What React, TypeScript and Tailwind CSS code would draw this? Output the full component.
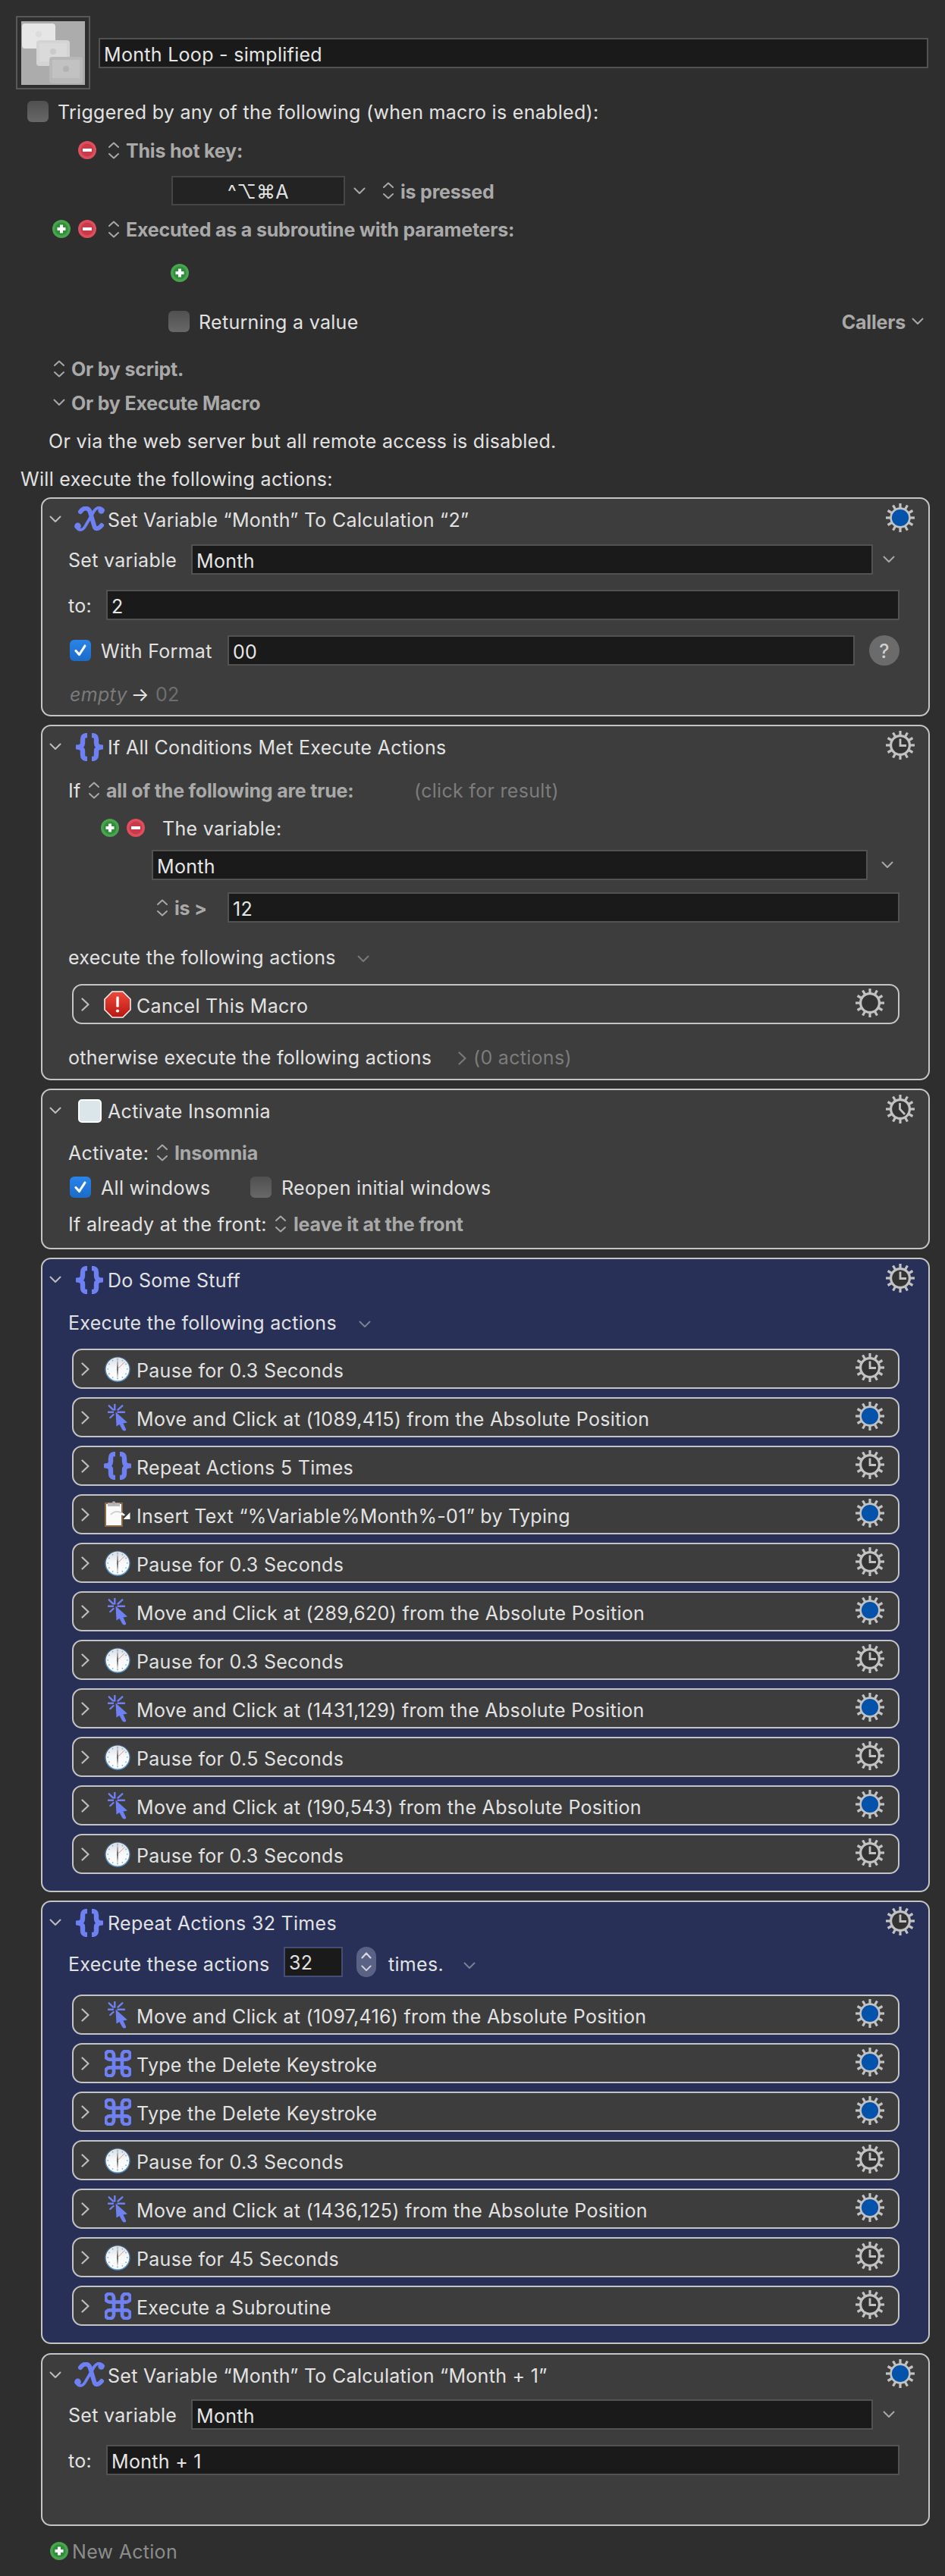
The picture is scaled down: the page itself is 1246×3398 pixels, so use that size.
import React from "react";

const BLUE = "#6f80f2";

function Chev({ dir = "down", color = "#bdbdbd", w = 16, h = 10, sw = 2 }: { dir?: "down" | "right"; color?: string; w?: number; h?: number; sw?: number }) {
  if (dir === "right")
    return (
      <svg width="11" height="18" viewBox="0 0 11 18" className="shrink-0">
        <path d="M1.5 1.5 L9.5 9 L1.5 16.5" fill="none" stroke={color} strokeWidth={2.2} strokeLinecap="round" strokeLinejoin="round" />
      </svg>
    );
  return (
    <svg width={w} height={h} viewBox="0 0 16 10" className="shrink-0">
      <path d="M1.5 1.5 L8 8 L14.5 1.5" fill="none" stroke={color} strokeWidth={sw} strokeLinecap="round" strokeLinejoin="round" />
    </svg>
  );
}

function UpDown({ color = "#a8a8a8" }: { color?: string }) {
  return (
    <svg width="16" height="23" viewBox="0 0 16 23" className="shrink-0">
      <path d="M2 7 L8 1.5 L14 7 M2 16 L8 21.5 L14 16" fill="none" stroke={color} strokeWidth={2} strokeLinecap="round" strokeLinejoin="round" />
    </svg>
  );
}

function Plus() {
  return (
    <svg width="24" height="24" viewBox="0 0 24 24" className="shrink-0">
      <circle cx="12" cy="12" r="12" fill="#4aa34e" />
      <circle cx="12" cy="12" r="8.5" fill="#2f8f3a" />
      <path d="M12 6.5 V17.5 M6.5 12 H17.5" stroke="#fff" strokeWidth={4} />
    </svg>
  );
}

function Minus() {
  return (
    <svg width="24" height="24" viewBox="0 0 24 24" className="shrink-0">
      <circle cx="12" cy="12" r="12" fill="#dd4f5c" />
      <circle cx="12" cy="12" r="8.5" fill="#c93a4a" />
      <path d="M6 12 H18" stroke="#fff" strokeWidth={4} />
    </svg>
  );
}

function Check({ on = false }: { on?: boolean }) {
  if (on)
    return (
      <div className="w-[28px] h-[28px] rounded-[6px] bg-gradient-to-b from-[#2a84ea] to-[#1c6bc8] shrink-0 flex items-center justify-center">
        <svg width="20" height="20" viewBox="0 0 20 20">
          <path d="M4 10.5 L8.5 15.5 L16 4" fill="none" stroke="#fff" strokeWidth={3.2} strokeLinecap="round" strokeLinejoin="round" />
        </svg>
      </div>
    );
  return <div className="w-[28px] h-[28px] rounded-[6px] bg-gradient-to-b from-[#505050] to-[#686868] shrink-0" />;
}

const ANGLES = [0, 30, 60, 90, 120, 150, 180, 210, 240, 270, 300, 330];

function Gear({ kind }: { kind: "blue" | "clock" | "none" | "diag" }) {
  return (
    <svg width="38" height="38" viewBox="0 0 38 38" className="shrink-0">
      {ANGLES.map((a) => (
        <rect key={a} x="17.4" y="0" width="3.2" height="8" fill="#c2c2c2" transform={`rotate(${a} 19 19)`} />
      ))}
      <circle cx="19" cy="19" r="12.4" fill={kind === "blue" ? "#0353ab" : "#333333"} stroke="#c2c2c2" strokeWidth={kind === "blue" ? 2.6 : 3.2} />
      {kind === "clock" && <path d="M19 10.5 V19.5 H27" fill="none" stroke="#c2c2c2" strokeWidth={2.8} />}
      {kind === "diag" && <path d="M18.5 11 V19 L25 26" fill="none" stroke="#c2c2c2" strokeWidth={2.8} />}
    </svg>
  );
}

function XIcon() {
  return (
    <svg width="40" height="34" viewBox="0 0 40 34" className="shrink-0">
      <path d="M8 7 C12 1 19 1 21 8 L26 25 C27.5 31 32 30 36 25" fill="none" stroke={BLUE} strokeWidth={6} strokeLinecap="round" />
      <path d="M38 5 C33 -1 28 2 25 8 L15 25 C11 33 5 32 3 27" fill="none" stroke={BLUE} strokeWidth={3.8} strokeLinecap="round" />
      <circle cx="35.5" cy="5.5" r="4.2" fill={BLUE} />
      <circle cx="4.5" cy="26" r="4.4" fill={BLUE} />
    </svg>
  );
}

function Braces() {
  return (
    <svg width="36" height="37" viewBox="0 0 36 37" className="shrink-0">
      <path d="M15 3 C10 3 9 5 9 9 V13 C9 16 7 18.5 2 18.5 C7 18.5 9 21 9 24 V28 C9 32 10 34 15 34" fill="none" stroke={BLUE} strokeWidth={6.4} strokeLinejoin="round" />
      <path d="M21 3 C26 3 27 5 27 9 V13 C27 16 29 18.5 34 18.5 C29 18.5 27 21 27 24 V28 C27 32 26 34 21 34" fill="none" stroke={BLUE} strokeWidth={6.4} strokeLinejoin="round" />
    </svg>
  );
}

function Cmd() {
  return (
    <svg width="35" height="36" viewBox="2.4 2.4 19.2 19.2" className="shrink-0">
      <path d="M15 6v12a3 3 0 1 0 3-3H6a3 3 0 1 0 3 3V6a3 3 0 1 0-3 3h12a3 3 0 1 0-3-3" fill="none" stroke={BLUE} strokeWidth={2.6} />
    </svg>
  );
}

function Cursor() {
  return (
    <svg width="26" height="36" viewBox="0 0 26 36" className="shrink-0">
      <path d="M10.5 10.5 L26 24.5 L20.5 25.5 L24 33 Q24.5 35.5 22 35.5 Q20 35.5 19 33.5 L15.5 27 L11.5 29.5 Z" fill={BLUE} />
      <path d="M9.3 0.5 V7.5 M1.7 2.3 L7.2 7.6 M19.3 2.3 L13.5 7.6 M0.5 10.7 H7 M3.3 18 L7.5 14 M13.5 10.7 H22" stroke={BLUE} strokeWidth={2.4} strokeLinecap="round" />
    </svg>
  );
}

function ClockIcon() {
  return (
    <svg width="34" height="34" viewBox="0 0 34 34" className="shrink-0">
      <defs>
        <linearGradient id="cf" x1="0" y1="0" x2="0" y2="1">
          <stop offset="0" stopColor="#d8dce2" />
          <stop offset="0.45" stopColor="#f6f7f8" />
          <stop offset="1" stopColor="#ffffff" />
        </linearGradient>
        <linearGradient id="cr" x1="0" y1="0" x2="0" y2="1">
          <stop offset="0" stopColor="#3a4f66" />
          <stop offset="1" stopColor="#5aa0de" />
        </linearGradient>
      </defs>
      <circle cx="17" cy="17" r="16.8" fill="url(#cr)" />
      <circle cx="17" cy="16.8" r="15.4" fill="url(#cf)" />
      {ANGLES.map((a) => (
        <circle key={a} cx="17" cy="4" r="0.9" fill="#7fb0e0" transform={`rotate(${a} 17 16.8)`} />
      ))}
      <path d="M17 3.5 L17.7 16.8 L17 30 L16.3 16.8 Z" fill="#222" />
      <path d="M17 16.8 L26.5 7.5" stroke="#e08072" strokeWidth={0.8} />
    </svg>
  );
}

function Clipboard() {
  return (
    <svg width="36" height="35" viewBox="0 0 36 35" className="shrink-0">
      <rect x="1" y="2" width="24" height="32" fill="#8a6a48" />
      <rect x="3" y="4" width="20" height="28" fill="#fafafa" />
      <rect x="5" y="2.5" width="16" height="4.5" fill="#b8b8b8" />
      <circle cx="13" cy="2.5" r="2.2" fill="#aaaaaa" />
      <path d="M9 18 C14 12.5 21 13 26 18" fill="none" stroke="#d2d2d2" strokeWidth={2} />
      <path d="M22 17 C24 17 26 17.5 27 19" fill="none" stroke="#fff" strokeWidth={2.4} />
      <path d="M34.5 15 V24 H25.5 Z" fill="#fff" />
    </svg>
  );
}

function Stop() {
  return (
    <svg width="36" height="36" viewBox="0 0 36 36" className="shrink-0">
      <defs>
        <linearGradient id="st" x1="0" y1="0" x2="0" y2="1">
          <stop offset="0" stopColor="#ee4a3e" />
          <stop offset="1" stopColor="#b8160f" />
        </linearGradient>
      </defs>
      <path d="M11 1 H25 L35 11 V25 L25 35 H11 L1 25 V11 Z" fill="url(#st)" stroke="#f2f2f2" strokeWidth={1.6} />
      <rect x="16.3" y="7.5" width="3.4" height="14" rx="1.2" fill="#fff" />
      <circle cx="18" cy="26.5" r="2.1" fill="#fff" />
    </svg>
  );
}

function AppTile() {
  return <div className="w-[31px] h-[31px] rounded-[5px] bg-[#dbe6ea] border-2 border-[#fbfdfd] shrink-0" />;
}

function MacroIcon() {
  return (
    <svg width="84" height="84" viewBox="0 0 84 84">
      <rect width="84" height="84" fill="#acacac" />
      <rect x="1" y="3" width="44" height="33" rx="4" fill="#e6e6e6" />
      <rect x="20" y="25" width="44" height="34" rx="4" fill="#d4d4d4" />
      <rect x="24" y="29" width="36" height="24" fill="#dadada" />
      <rect x="37" y="47" width="44" height="35" rx="4" fill="#b8b8b8" />
      <rect x="41" y="51" width="36" height="24" fill="#c2c2c2" />
      <circle cx="23" cy="17" r="4" fill="#dcdcdc" />
      <circle cx="42" cy="40" r="4" fill="#cacaca" />
      <circle cx="59" cy="63" r="4" fill="#b2b2b2" />
    </svg>
  );
}

function Field({ children, cls = "" }: { children?: React.ReactNode; cls?: string }) {
  return (
    <div className={`h-[40px] bg-[#1a1a1a] border-2 border-[#525252] pl-[5px] flex items-center leading-none text-[#e6e6e6] ${cls}`}>
      <span className="relative top-[1px]">{children}</span>
    </div>
  );
}

function Bold({ children }: { children: React.ReactNode }) {
  return <span className="font-bold text-[#a9a9a9] tracking-[-0.2px]">{children}</span>;
}

type GearKind = "blue" | "clock" | "none" | "diag";

function Head({ icon, title, gear }: { icon: React.ReactNode; title: string; gear: GearKind }) {
  return (
    <div className="h-[54px] flex items-center pl-[9px] pr-[18px]">
      <div className="w-[16px] flex justify-center">
        <Chev />
      </div>
      <div className="w-[40px] ml-[17px] flex justify-center">{icon}</div>
      <span className="ml-[4px]">{title}</span>
      <div className="ml-auto -mt-[4px]">
        <Gear kind={gear} />
      </div>
    </div>
  );
}

function Sub({ icon, title, gear }: { icon: React.ReactNode; title: string; gear: GearKind }) {
  return (
    <div className="h-[53px] ml-[5px] rounded-[13px] border-2 border-[#c4c4c4] bg-[#3d3d3d] flex items-center pl-[10px] pr-[18px]">
      <Chev dir="right" />
      <div className="w-[40px] ml-[17px] flex justify-center">{icon}</div>
      <span className="ml-[5px] relative top-[1px]">{title}</span>
      <div className="ml-auto -mt-[3px]">
        <Gear kind={gear} />
      </div>
    </div>
  );
}

function Box({ blue = false, children, cls = "" }: { blue?: boolean; children: React.ReactNode; cls?: string }) {
  return (
    <div className={`rounded-[13px] border-2 border-[#c4c4c4] ${blue ? "bg-[#283058]" : "bg-[#3d3d3d]"} ${cls}`}>{children}</div>
  );
}

const Row = "h-[34px] flex items-center";

const stuff: [React.ReactNode, string, GearKind][] = [
  [<ClockIcon />, "Pause for 0.3 Seconds", "clock"],
  [<Cursor />, "Move and Click at (1089,415) from the Absolute Position", "blue"],
  [<Braces />, "Repeat Actions 5 Times", "clock"],
  [<Clipboard />, "Insert Text “%Variable%Month%-01” by Typing", "blue"],
  [<ClockIcon />, "Pause for 0.3 Seconds", "clock"],
  [<Cursor />, "Move and Click at (289,620) from the Absolute Position", "blue"],
  [<ClockIcon />, "Pause for 0.3 Seconds", "clock"],
  [<Cursor />, "Move and Click at (1431,129) from the Absolute Position", "blue"],
  [<ClockIcon />, "Pause for 0.5 Seconds", "clock"],
  [<Cursor />, "Move and Click at (190,543) from the Absolute Position", "blue"],
  [<ClockIcon />, "Pause for 0.3 Seconds", "clock"],
];

const repeat: [React.ReactNode, string, GearKind][] = [
  [<Cursor />, "Move and Click at (1097,416) from the Absolute Position", "blue"],
  [<Cmd />, "Type the Delete Keystroke", "blue"],
  [<Cmd />, "Type the Delete Keystroke", "blue"],
  [<ClockIcon />, "Pause for 0.3 Seconds", "clock"],
  [<Cursor />, "Move and Click at (1436,125) from the Absolute Position", "blue"],
  [<ClockIcon />, "Pause for 45 Seconds", "clock"],
  [<Cmd />, "Execute a Subroutine", "clock"],
];

export default function App() {
  return (
    <div className="w-[1246px] h-[3398px] overflow-hidden bg-[#2e2e2e] text-[#e2e2e2] text-[25px] leading-[34px] tracking-[0.3px] [font-family:Inter,'DejaVu_Sans',sans-serif] [&_span]:translate-y-[1px]">
      <div className="flex h-[118px] pt-[21px] pl-[21px]">
        <div className="w-[98px] h-[97px] border-2 border-[#585858] p-[5px] shrink-0">
          <MacroIcon />
        </div>
        <div className="ml-[11px] mt-[29px] w-[1094px]">
          <Field>Month Loop - simplified</Field>
        </div>
      </div>

      <div className={`${Row} mt-[12px] pl-[36px] gap-[12px]`}>
        <Check />
        <span>Triggered by any of the following (when macro is enabled):</span>
      </div>
      <div className={`${Row} mt-[17px] pl-[103px]`}>
        <Minus />
        <div className="ml-[15px]">
          <UpDown />
        </div>
        <span className="ml-[8px]">
          <Bold>This hot key:</Bold>
        </span>
      </div>
      <div className="h-[39px] mt-[17px] flex items-center pl-[226px]">
        <div className="w-[229px] h-[39px] bg-[#232323] border-2 border-[#464646] flex items-center justify-center">
          <span>^⌥⌘A</span>
        </div>
        <div className="ml-[11px]">
          <Chev color="#a8a8a8" />
        </div>
        <div className="ml-[22px]">
          <UpDown />
        </div>
        <span className="ml-[8px]">
          <Bold>is pressed</Bold>
        </span>
      </div>
      <div className={`${Row} mt-[14px] pl-[69px]`}>
        <Plus />
        <div className="ml-[10px]">
          <Minus />
        </div>
        <div className="ml-[15px]">
          <UpDown />
        </div>
        <span className="ml-[8px]">
          <Bold>Executed as a subroutine with parameters:</Bold>
        </span>
      </div>
      <div className={`${Row} mt-[24px] pl-[225px]`}>
        <Plus />
      </div>
      <div className={`${Row} mt-[30px] pl-[222px] pr-[28px] gap-[12px]`}>
        <Check />
        <span>Returning a value</span>
        <div className="ml-auto flex items-center gap-[8px]">
          <Bold>Callers</Bold>
          <Chev color="#a8a8a8" />
        </div>
      </div>
      <div className={`${Row} mt-[28px] pl-[70px] gap-[8px]`}>
        <UpDown />
        <Bold>Or by script.</Bold>
      </div>
      <div className={`${Row} mt-[11px] pl-[70px] gap-[8px]`}>
        <Chev color="#a8a8a8" />
        <Bold>Or by Execute Macro</Bold>
      </div>
      <div className={`${Row} mt-[16px] pl-[64px]`}>
        <span>Or via the web server but all remote access is disabled.</span>
      </div>
      <div className={`${Row} mt-[16px] pl-[27px]`}>
        <span>Will execute the following actions:</span>
      </div>

      <div className="mt-[8px] ml-[54px] mr-[20px] flex flex-col gap-[11px]">
        <Box>
          <Head icon={<XIcon />} title="Set Variable “Month” To Calculation “2”" gear="blue" />
          <div className="pl-[34px] pr-[38px] pb-[11px]">
            <div className="flex items-center mt-[6px]">
              <span className="w-[162px]">Set variable</span>
              <Field cls="flex-1">Month</Field>
              <div className="w-[35px] pl-[13px]">
                <Chev color="#a8a8a8" />
              </div>
            </div>
            <div className="flex items-center mt-[20px]">
              <span className="w-[50px]">to:</span>
              <Field cls="flex-1">2</Field>
            </div>
            <div className="flex items-center mt-[20px]">
              <div className="w-[210px] pl-[2px] flex items-center gap-[13px]">
                <Check on />
                <span>With Format</span>
              </div>
              <Field cls="flex-1">00</Field>
              <div className="ml-[19px] w-[40px] h-[40px] rounded-full bg-[#6b6b6b] flex items-center justify-center text-[#d0d0d0] font-medium">
                <span>?</span>
              </div>
            </div>
            <div className={`${Row} mt-[20px] pl-[2px]`}>
              <span className="italic text-[#7a7a7a]">empty</span>
              <span className="text-[#e6e6e6] ml-[5px]">→</span>
              <span className="text-[#6e6e6e] ml-[8px]">02</span>
            </div>
          </div>
        </Box>

        <Box>
          <Head icon={<Braces />} title="If All Conditions Met Execute Actions" gear="clock" />
          <div className="pl-[34px] pr-[38px] pb-[12px]">
            <div className={`${Row} mt-[13px]`}>
              <span className="w-[26px]">If</span>
              <UpDown />
              <span className="ml-[8px] w-[406px]">
                <Bold>all of the following are true:</Bold>
              </span>
              <span className="text-[#7c7c7c]">(click for result)</span>
            </div>
            <div className={`${Row} mt-[16px] pl-[43px]`}>
              <Plus />
              <div className="ml-[10px]">
                <Minus />
              </div>
              <span className="ml-[23px]">The variable:</span>
            </div>
            <div className="flex items-center mt-[12px] pl-[110px]">
              <Field cls="flex-1">Month</Field>
              <div className="w-[42px] pl-[18px]">
                <Chev color="#a8a8a8" />
              </div>
            </div>
            <div className="flex items-center mt-[16px]">
              <div className="w-[210px] pl-[116px] flex items-center gap-[8px]">
                <UpDown />
                <Bold>is &gt;</Bold>
              </div>
              <Field cls="flex-1">12</Field>
            </div>
            <div className={`${Row} mt-[28px]`}>
              <span className="w-[381px]">execute the following actions</span>
              <div className="mt-[6px]">
                <Chev color="#7a7a7a" />
              </div>
            </div>
            <div className="mt-[19px]">
              <Sub icon={<Stop />} title="Cancel This Macro" gear="none" />
            </div>
            <div className={`${Row} mt-[26px]`}>
              <span className="w-[514px]">otherwise execute the following actions</span>
              <div className="mt-[3px]">
                <Chev dir="right" color="#7a7a7a" />
              </div>
              <span className="ml-[9px] text-[#7c7c7c]">(0 actions)</span>
            </div>
          </div>
        </Box>

        <Box>
          <Head icon={<AppTile />} title="Activate Insomnia" gear="diag" />
          <div className="pl-[34px] pr-[38px] pb-[15px]">
            <div className={`${Row} mt-[11px]`}>
              <span className="w-[116px]">Activate:</span>
              <UpDown />
              <span className="ml-[8px]">
                <Bold>Insomnia</Bold>
              </span>
            </div>
            <div className={`${Row} mt-[12px] pl-[2px]`}>
              <Check on />
              <span className="ml-[13px] w-[197px]">All windows</span>
              <Check />
              <span className="ml-[13px]">Reopen initial windows</span>
            </div>
            <div className={`${Row} mt-[14px]`}>
              <span className="w-[272px]">If already at the front:</span>
              <UpDown />
              <span className="ml-[9px]">
                <Bold>leave it at the front</Bold>
              </span>
            </div>
          </div>
        </Box>

        <Box blue>
          <Head icon={<Braces />} title="Do Some Stuff" gear="clock" />
          <div className="pl-[34px] pr-[38px] pb-[22px]">
            <div className={`${Row} mt-[12px]`}>
              <span className="w-[383px]">Execute the following actions</span>
              <div className="mt-[6px]">
                <Chev color="#7a7f96" />
              </div>
            </div>
            <div className="mt-[18px] flex flex-col gap-[11px]">
              {stuff.map(([icon, t, g], i) => (
                <Sub key={i} icon={icon} title={t} gear={g} />
              ))}
            </div>
          </div>
        </Box>

        <Box blue>
          <Head icon={<Braces />} title="Repeat Actions 32 Times" gear="clock" />
          <div className="pl-[34px] pr-[38px] pb-[22px]">
            <div className="flex items-center mt-[5px] h-[40px]">
              <span className="w-[284px] relative top-[2px]">Execute these actions</span>
              <div className="w-[78px] h-[40px] bg-[#1a1a1a] border-2 border-[#454d74] pl-[5px] flex items-center leading-none">
                <span>32</span>
              </div>
              <div className="ml-[18px] w-[26px] h-[40px] rounded-full bg-[#5a6285] flex flex-col items-center justify-center gap-[8px]">
                <svg width="14" height="9" viewBox="0 0 14 9">
                  <path d="M1.5 7.5 L7 1.5 L12.5 7.5" fill="none" stroke="#d8d8e0" strokeWidth={2.2} strokeLinecap="round" strokeLinejoin="round" />
                </svg>
                <Chev w={14} h={9} color="#d8d8e0" sw={2.2} />
              </div>
              <span className="ml-[16px] w-[99px] relative top-[2px]">times.</span>
              <div className="mt-[10px]">
                <Chev color="#7a7f96" />
              </div>
            </div>
            <div className="mt-[23px] flex flex-col gap-[11px]">
              {repeat.map(([icon, t, g], i) => (
                <Sub key={i} icon={icon} title={t} gear={g} />
              ))}
            </div>
          </div>
        </Box>

        <Box cls="mt-[1px]">
          <Head icon={<XIcon />} title="Set Variable “Month” To Calculation “Month + 1”" gear="blue" />
          <div className="pl-[34px] pr-[38px] pb-[65px]">
            <div className="flex items-center mt-[5px]">
              <span className="w-[162px]">Set variable</span>
              <Field cls="flex-1">Month</Field>
              <div className="w-[35px] pl-[13px]">
                <Chev color="#a8a8a8" />
              </div>
            </div>
            <div className="flex items-center mt-[20px]">
              <span className="w-[50px]">to:</span>
              <Field cls="flex-1">Month + 1</Field>
            </div>
          </div>
        </Box>
      </div>

      <div className={`${Row} mt-[16px] pl-[66px]`}>
        <Plus />
        <span className="ml-[5px] text-[#8c8c8c]">New Action</span>
      </div>
    </div>
  );
}
